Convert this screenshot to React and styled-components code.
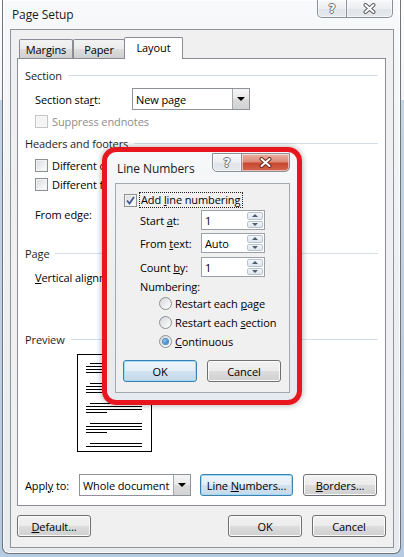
import React from 'react';
import styled, { createGlobalStyle } from 'styled-components';

const GlobalStyle = createGlobalStyle`
  html, body { margin: 0; padding: 0; }
  body {
    width: 404px; height: 557px; overflow: hidden;
    background: linear-gradient(180deg, #ffffff 0, #f2f4f7 100px, #c3d4e6 100px, #b6cbe1 100%);
    font-family: "Open Sans", "Noto Sans", sans-serif;
    font-size: 11px;
    letter-spacing: -0.1px;
    color: #000;
  }
`;

const Screen = styled.div`
  position: relative;
  width: 404px;
  height: 557px;
  overflow: hidden;
`;

const Window = styled.div`
  box-sizing: border-box;
  margin-left: 2px;
  width: 399px;
  height: 554px;
  border: 1px solid #707479;
  border-top: none;
  border-radius: 0 0 7px 7px;
  background: linear-gradient(180deg, #f8f9fa 0%, #eef0f3 45%, #e7eaee 100%);
  box-shadow: inset 0 0 0 1px rgba(255, 255, 255, 0.85);
  padding: 0 6px 5px 7px;
  display: flex;
  flex-direction: column;
`;

const TitleBar = styled.div`
  flex: none;
  display: flex;
  justify-content: space-between;
  align-items: flex-start;
  height: ${p => p.$h}px;
`;

const TitleText = styled.div`
  font-size: 12px;
  line-height: 16px;
  color: #1b1b1b;
  padding: ${p => p.$pt}px 0 0 ${p => p.$pl}px;
`;

const CaptionGroup = styled.div`
  display: flex;
  margin: ${p => p.$mt}px ${p => p.$mr}px 0 0;
`;

const CaptionButton = styled.div`
  box-sizing: border-box;
  width: ${p => p.$w}px;
  height: ${p => p.$h}px;
  display: flex;
  align-items: center;
  justify-content: center;
  border: 1px solid #8a9097;
  border-top: ${p => (p.$open ? 'none' : '1px solid #8a9097')};
  margin-left: ${p => (p.$first ? 0 : -1)}px;
  border-radius: ${p => (p.$first ? '0 0 0 5px' : '0 0 5px 0')};
  background: ${p =>
    p.$red
      ? 'linear-gradient(180deg, #eab0a2 0%, #dd8b78 45%, #c9472f 55%, #d4664f 100%)'
      : 'linear-gradient(180deg, #f7f8f9 0%, #eceef1 50%, #e0e3e7 51%, #e6e9ec 100%)'};
  box-shadow: inset 0 0 0 1px rgba(255, 255, 255, 0.55);
`;

const HelpGlyph = styled.span`
  font-family: "DejaVu Sans", sans-serif;
  font-weight: bold;
  font-size: 12px;
  line-height: 12px;
  color: #ffffff;
  text-shadow: 1px 0 #6b6f75, -1px 0 #6b6f75, 0 1px #6b6f75, 0 -1px #6b6f75;
`;

const Client = styled.div`
  flex: 1;
  box-sizing: border-box;
  border: 1px solid #8f949a;
  background: #f0f0f0;
  padding: 7px 7px 0 6px;
  display: flex;
  flex-direction: column;
`;

const TabStrip = styled.div`
  display: flex;
  align-items: flex-end;
  height: 21px;
  padding-left: 2px;
  position: relative;
  z-index: 1;
`;

const Tab = styled.div`
  box-sizing: border-box;
  width: ${p => p.$w}px;
  height: ${p => (p.$active ? 22 : 19)}px;
  margin-left: ${p => p.$ml || 0}px;
  margin-bottom: ${p => (p.$active ? -1 : 0)}px;
  border: 1px solid #898c95;
  border-bottom: none;
  border-radius: 2px 2px 0 0;
  background: ${p =>
    p.$active ? '#ffffff' : 'linear-gradient(180deg, #f3f3f3 0%, #ebebeb 50%, #dddddd 51%, #cfcfcf 100%)'};
  display: flex;
  align-items: center;
  justify-content: center;
  padding-bottom: ${p => (p.$active ? 2 : 0)}px;
`;

const Panel = styled.div`
  box-sizing: border-box;
  height: 448px;
  background: #ffffff;
  border: 1px solid #898c95;
  padding: 8px 7px 9px 7px;
  display: flex;
  flex-direction: column;
`;

const GroupHeading = styled.div`
  display: flex;
  align-items: center;
  gap: 6px;
  height: 16px;
  margin-top: ${p => p.$top || 0}px;
  color: #1d1d1d;
  &::after {
    content: '';
    flex: 1;
    height: 1px;
    background: #d5dee6;
  }
`;

const Line = styled.div`
  display: flex;
  align-items: center;
  height: ${p => p.$h || 16}px;
  margin-top: ${p => p.$top || 0}px;
  padding-left: ${p => p.$indent || 0}px;
  color: ${p => (p.$disabled ? '#8d8d8d' : '#000')};
`;

const Label = styled.span`
  white-space: pre;
`;

const FieldLabel = styled.span`
  flex: none;
  white-space: pre;
  width: ${p => p.$w}px;
`;

const Acc = styled.span`
  text-decoration: underline;
  text-underline-offset: 1px;
`;

const Select = styled.div`
  box-sizing: border-box;
  width: ${p => p.$w}px;
  height: 22px;
  border: 1px solid #8e9399;
  background: #fff;
  display: flex;
  align-items: center;
  padding-left: 3px;
`;

const SelectText = styled.span`
  flex: 1;
  white-space: pre;
`;

const DropButton = styled.div`
  box-sizing: border-box;
  width: 17px;
  height: 20px;
  border-left: 1px solid #a5a9ae;
  background: linear-gradient(180deg, #f5f5f5 0%, #e8e8e8 50%, #dadada 51%, #d3d3d3 100%);
  display: flex;
  align-items: center;
  justify-content: center;
  &::after {
    content: '';
    border-left: 4px solid transparent;
    border-right: 4px solid transparent;
    border-top: 4px solid #000;
  }
`;

const Box = styled.span`
  flex: none;
  box-sizing: border-box;
  width: 13px;
  height: 13px;
  margin-right: ${p => p.$gap}px;
  border: 1px solid ${p => (p.$disabled ? '#c5c5c5' : '#8e8f8f')};
  background: ${p => (p.$disabled ? '#f4f4f4' : 'linear-gradient(135deg, #d6d9de 0%, #f4f5f6 70%, #ffffff 100%)')};
  box-shadow: inset 0 0 0 1px ${p => (p.$disabled ? '#f8f8f8' : '#f2f3f4')};
  display: flex;
  align-items: center;
  justify-content: center;
`;

const RadioCircle = styled.span`
  flex: none;
  box-sizing: border-box;
  width: 13px;
  height: 13px;
  margin-right: 3px;
  border-radius: 50%;
  border: 1px solid #8e8f8f;
  background: linear-gradient(135deg, #d3d6da 0%, #f3f4f5 70%, #ffffff 100%);
  display: flex;
  align-items: center;
  justify-content: center;
  &::after {
    content: '';
    display: ${p => (p.$on ? 'block' : 'none')};
    width: 5px;
    height: 5px;
    border-radius: 50%;
    background: radial-gradient(circle at 35% 35%, #8cc8f2, #1d5fa6);
    box-shadow: 0 0 0 1px #4b8ac4;
  }
`;

const Button = styled.div`
  box-sizing: border-box;
  flex: none;
  width: ${p => p.$w}px;
  height: 22px;
  margin-left: ${p => p.$ml || 0}px;
  border: 1px solid ${p => (p.$focus ? '#3c7fb1' : '#707070')};
  border-radius: 3px;
  background: ${p =>
    p.$focus
      ? 'linear-gradient(180deg, #eef5fa 0%, #e3eef7 50%, #d2e2ef 51%, #c6daea 100%)'
      : 'linear-gradient(180deg, #f2f2f2 0%, #ebebeb 50%, #dddddd 51%, #cfcfcf 100%)'};
  box-shadow: inset 0 0 0 1px ${p => (p.$focus ? '#9fdcf8' : '#fbfbfb')};
  display: flex;
  align-items: center;
  justify-content: center;
  white-space: pre;
`;

const Spacer = styled.div`
  flex: 1;
`;

const ButtonRow = styled.div`
  display: flex;
  align-items: center;
  height: 22px;
  margin-top: ${p => p.$top}px;
  margin-left: ${p => p.$ml || 0}px;
`;

const PreviewPage = styled.svg`
  display: block;
  flex: none;
  margin: 7px 0 0 52px;
`;

/* ---- Line Numbers dialog ---- */

const Highlight = styled.div`
  position: absolute;
  left: 102px;
  top: 147px;
  width: 200px;
  height: 258px;
  box-sizing: border-box;
  border: 5px solid #e8161f;
  border-radius: 14px;
  box-shadow: 0 0 6px rgba(0, 0, 0, 0.35);
  overflow: hidden;
  background: linear-gradient(180deg, #f7f8fa 0%, #eceff2 50%, #e6e9ed 100%);
  display: flex;
  flex-direction: column;
`;

const LnClient = styled.div`
  flex: 1;
  margin: 0 7px 7px 8px;
  border: 1px solid #a3a9b0;
  background: #f0f0f0;
  padding: 8px 0 0 8px;
  display: flex;
  flex-direction: column;
`;

const FocusLabel = styled.span`
  box-sizing: border-box;
  height: 16px;
  line-height: 14px;
  margin-left: 1px;
  padding: 0 2px 0 1px;
  border: 1px dotted #222;
  white-space: pre;
`;

const Spin = styled.div`
  box-sizing: border-box;
  width: 64px;
  height: 20px;
  border: 1px solid #9aa0a8;
  background: #fff;
  display: flex;
  align-items: stretch;
`;

const SpinValue = styled.span`
  flex: 1;
  padding-left: 3px;
  display: flex;
  align-items: center;
`;

const SpinArrows = styled.div`
  width: 16px;
  display: flex;
  flex-direction: column;
  gap: 1px;
  padding: 1px 1px 1px 0;
`;

const SpinHalf = styled.div`
  flex: 1;
  border: 1px solid #b9c3cf;
  border-radius: 2px;
  background: linear-gradient(180deg, #f4f7fa, #dde5ee);
  display: flex;
  align-items: center;
  justify-content: center;
  &::after {
    content: '';
    border-left: 3px solid transparent;
    border-right: 3px solid transparent;
    ${p => (p.$up ? 'border-bottom: 3px solid #4e5d70;' : 'border-top: 3px solid #4e5d70;')}
  }
`;

const CloseIcon = () => (
  <svg width="13" height="11" viewBox="0 0 13 11">
    <path d="M2.5 2 L10.5 9 M10.5 2 L2.5 9" stroke="#5d5f63" strokeWidth="4" strokeLinecap="round" />
    <path d="M2.5 2 L10.5 9 M10.5 2 L2.5 9" stroke="#ffffff" strokeWidth="2" strokeLinecap="round" />
  </svg>
);

const RedCloseIcon = () => (
  <svg width="13" height="11" viewBox="0 0 13 11">
    <path d="M2.5 2 L10.5 9 M10.5 2 L2.5 9" stroke="#6d2c22" strokeWidth="4" strokeLinecap="round" />
    <path d="M2.5 2 L10.5 9 M10.5 2 L2.5 9" stroke="#ffffff" strokeWidth="2" strokeLinecap="round" />
  </svg>
);

const CheckMark = () => (
  <svg width="9" height="9" viewBox="0 0 9 9">
    <path d="M1 4.5 L3.5 7.5 L8 1" fill="none" stroke="#42598d" strokeWidth="1.8" />
  </svg>
);

const paragraphs = [9, 29, 49, 69, 89];

const Preview = () => (
  <PreviewPage width="75" height="98" viewBox="0 0 75 98">
    <rect x="0.5" y="0.5" width="74" height="97" fill="#fff" stroke="#000" />
    {paragraphs.map((y, i) => (
      <g key={i} stroke="#000" strokeWidth="1">
        <line x1="13" x2="65" y1={y + 0.5} y2={y + 0.5} />
        <line x1="9" x2="65" y1={y + 3.5} y2={y + 3.5} />
        {y < 89 && <line x1="9" x2="65" y1={y + 6.5} y2={y + 6.5} />}
        {y < 89 && <line x1="9" x2="30" y1={y + 9.5} y2={y + 9.5} />}
      </g>
    ))}
  </PreviewPage>
);

const Spinner = ({ value }) => (
  <Spin>
    <SpinValue>{value}</SpinValue>
    <SpinArrows>
      <SpinHalf $up />
      <SpinHalf />
    </SpinArrows>
  </Spin>
);

export default function App() {
  return (
    <Screen>
      <GlobalStyle />
      <Window>
        <TitleBar $h={29}>
          <TitleText $pt={7} $pl={2}>Page Setup</TitleText>
          <CaptionGroup $mt={0} $mr={1}>
            <CaptionButton $w={30} $h={18} $open $first>
              <HelpGlyph>?</HelpGlyph>
            </CaptionButton>
            <CaptionButton $w={47} $h={18} $open>
              <CloseIcon />
            </CaptionButton>
          </CaptionGroup>
        </TitleBar>
        <Client>
          <TabStrip>
            <Tab $w={54}>Margins</Tab>
            <Tab $w={52}>Paper</Tab>
            <Tab $w={59} $ml={-1} $active>Layout</Tab>
          </TabStrip>
          <Panel>
            <GroupHeading>Section</GroupHeading>
            <Line $h={22} $top={5} $indent={10}>
              <FieldLabel $w={97}>Section sta<Acc>r</Acc>t:</FieldLabel>
              <Select $w={118}>
                <SelectText>New page</SelectText>
                <DropButton />
              </Select>
            </Line>
            <Line $top={3} $indent={10} $disabled>
              <Box $gap={4} $disabled />
              <Label>Suppress endnotes</Label>
            </Line>
            <GroupHeading $top={6}>Headers and footers</GroupHeading>
            <Line $top={6} $indent={10}>
              <Box $gap={4} />
              <Label>Different odd and even</Label>
            </Line>
            <Line $top={3} $indent={10}>
              <Box $gap={4} />
              <Label>Different first page</Label>
            </Line>
            <Line $h={22} $top={11} $indent={10}>
              <FieldLabel $w={97}>From edge:</FieldLabel>
            </Line>
            <GroupHeading $top={20}>Page</GroupHeading>
            <Line $h={22} $top={5} $indent={10}>
              <FieldLabel $w={97}><Acc>V</Acc>ertical alignment:</FieldLabel>
            </Line>
            <GroupHeading $top={43}>Preview</GroupHeading>
            <Preview />
            <Spacer />
            <Line $h={22}>
              <FieldLabel $w={54}>Appl<Acc>y</Acc> to:</FieldLabel>
              <Select $w={112}>
                <SelectText>Whole document</SelectText>
                <DropButton />
              </Select>
              <Button $w={93} $ml={9} $focus><Label>Line <Acc>N</Acc>umbers...</Label></Button>
              <Button $w={74} $ml={10}><Label><Acc>B</Acc>orders...</Label></Button>
            </Line>
          </Panel>
          <ButtonRow $top={9}>
            <Button $w={74}><Label><Acc>D</Acc>efault...</Label></Button>
            <Spacer />
            <Button $w={74}>OK</Button>
            <Button $w={74} $ml={10}>Cancel</Button>
          </ButtonRow>
        </Client>
      </Window>

      <Highlight>
        <TitleBar $h={31}>
          <TitleText $pt={9} $pl={10}>Line Numbers</TitleText>
          <CaptionGroup $mt={1} $mr={7}>
            <CaptionButton $w={30} $h={19} $first>
              <HelpGlyph>?</HelpGlyph>
            </CaptionButton>
            <CaptionButton $w={49} $h={19} $red>
              <RedCloseIcon />
            </CaptionButton>
          </CaptionGroup>
        </TitleBar>
        <LnClient>
          <Line>
            <Box $gap={1}><CheckMark /></Box>
            <FocusLabel>Add <Acc>l</Acc>ine numbering</FocusLabel>
          </Line>
          <Line $h={20} $top={2} $indent={16}>
            <FieldLabel $w={61}>Start <Acc>a</Acc>t:</FieldLabel>
            <Spinner value="1" />
          </Line>
          <Line $h={20} $top={3} $indent={16}>
            <FieldLabel $w={61}>From <Acc>t</Acc>ext:</FieldLabel>
            <Spinner value="Auto" />
          </Line>
          <Line $h={20} $top={4} $indent={16}>
            <FieldLabel $w={61}>Count <Acc>b</Acc>y:</FieldLabel>
            <Spinner value="1" />
          </Line>
          <Line $top={1} $indent={16}><Label>Numbering:</Label></Line>
          <Line $top={1} $indent={35}>
            <RadioCircle />
            <Label>Restart each <Acc>p</Acc>age</Label>
          </Line>
          <Line $top={3} $indent={35}>
            <RadioCircle />
            <Label>Restart each <Acc>s</Acc>ection</Label>
          </Line>
          <Line $top={3} $indent={35}>
            <RadioCircle $on />
            <Label><Acc>C</Acc>ontinuous</Label>
          </Line>
          <ButtonRow $top={11} $ml={-1}>
            <Button $w={74} $focus>OK</Button>
            <Button $w={74} $ml={10}>Cancel</Button>
          </ButtonRow>
        </LnClient>
      </Highlight>
    </Screen>
  );
}
